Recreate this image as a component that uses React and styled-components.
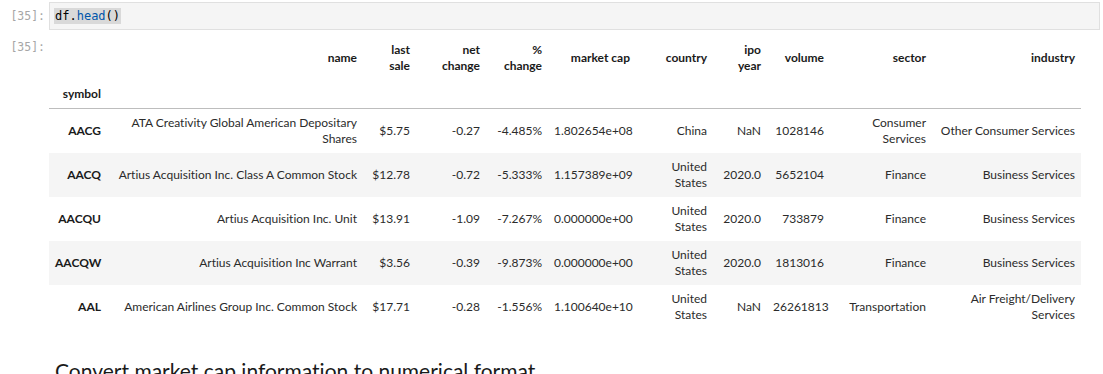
import React from 'react';
import styled, { createGlobalStyle } from 'styled-components';

const GlobalStyle = createGlobalStyle`
  body {
    margin: 0;
    background: #ffffff;
    font-family: Lato, "Open Sans", sans-serif;
    font-variant-ligatures: none;
    overflow: hidden;
  }
`;

const columns = [
  { key: 'name', label: ['name'], width: 256 },
  { key: 'last', label: ['last', 'sale'], width: 53 },
  { key: 'net', label: ['net', 'change'], width: 70 },
  { key: 'pct', label: ['%', 'change'], width: 62 },
  { key: 'cap', label: ['market cap'], width: 88 },
  { key: 'country', label: ['country'], width: 77 },
  { key: 'ipo', label: ['ipo', 'year'], width: 54 },
  { key: 'volume', label: ['volume'], width: 63 },
  { key: 'sector', label: ['sector'], width: 102 },
  { key: 'industry', label: ['industry'], width: 149 },
];

const rows = [
  {
    symbol: 'AACG',
    name: 'ATA Creativity Global American Depositary Shares',
    last: '$5.75', net: '-0.27', pct: '-4.485%', cap: '1.802654e+08',
    country: 'China', ipo: 'NaN', volume: '1028146',
    sector: 'Consumer Services', industry: 'Other Consumer Services',
  },
  {
    symbol: 'AACQ',
    name: 'Artius Acquisition Inc. Class A Common Stock',
    last: '$12.78', net: '-0.72', pct: '-5.333%', cap: '1.157389e+09',
    country: 'United States', ipo: '2020.0', volume: '5652104',
    sector: 'Finance', industry: 'Business Services',
  },
  {
    symbol: 'AACQU',
    name: 'Artius Acquisition Inc. Unit',
    last: '$13.91', net: '-1.09', pct: '-7.267%', cap: '0.000000e+00',
    country: 'United States', ipo: '2020.0', volume: '733879',
    sector: 'Finance', industry: 'Business Services',
  },
  {
    symbol: 'AACQW',
    name: 'Artius Acquisition Inc Warrant',
    last: '$3.56', net: '-0.39', pct: '-9.873%', cap: '0.000000e+00',
    country: 'United States', ipo: '2020.0', volume: '1813016',
    sector: 'Finance', industry: 'Business Services',
  },
  {
    symbol: 'AAL',
    name: 'American Airlines Group Inc. Common Stock',
    last: '$17.71', net: '-0.28', pct: '-1.556%', cap: '1.100640e+10',
    country: 'United States', ipo: 'NaN', volume: '26261813',
    sector: 'Transportation', industry: 'Air Freight/Delivery Services',
  },
];

function Notebook() {
  return (
    <Page>
      <GlobalStyle />
      <Cell>
        <Prompt>[35]:</Prompt>
        <Editor>
          <Selection>
            df.<Prop>head</Prop>()
          </Selection>
        </Editor>
      </Cell>

      <OutputCell>
        <Prompt>[35]:</Prompt>
        <OutputArea>
          <Frame>
            <colgroup>
              <col style={{ width: 58 }} />
              {columns.map((c) => (
                <col key={c.key} style={{ width: c.width }} />
              ))}
            </colgroup>
            <thead>
              <tr>
                <HeadCell />
                {columns.map((c) => (
                  <HeadCell key={c.key}>
                    {c.label.map((l, i) => (
                      <React.Fragment key={i}>
                        {i > 0 && <br />}
                        {l}
                      </React.Fragment>
                    ))}
                  </HeadCell>
                ))}
              </tr>
              <IndexRow>
                <HeadCell>symbol</HeadCell>
                {columns.map((c) => (
                  <HeadCell key={c.key} />
                ))}
              </IndexRow>
            </thead>
            <tbody>
              {rows.map((r, i) => (
                <BodyRow key={r.symbol} $striped={i % 2 === 1}>
                  <HeadCell>{r.symbol}</HeadCell>
                  {columns.map((c) => (
                    <DataCell key={c.key}>{r[c.key]}</DataCell>
                  ))}
                </BodyRow>
              ))}
            </tbody>
          </Frame>
        </OutputArea>
      </OutputCell>

      <MarkdownCell>
        <Heading>Convert market cap information to numerical format</Heading>
      </MarkdownCell>
    </Page>
  );
}

const Page = styled.div`
  width: 1103px;
  padding-top: 2px;
`;

const Cell = styled.div`
  display: flex;
  align-items: flex-start;
`;

const Prompt = styled.div`
  flex: 0 0 49px;
  box-sizing: border-box;
  padding: 7px 4px 0 0;
  text-align: right;
  font-family: "DejaVu Sans Mono", "Liberation Mono", monospace;
  font-size: 11.5px;
  line-height: 14px;
  color: #a6a6a6;
`;

const Editor = styled.div`
  flex: 1;
  margin-right: 3px;
  height: 28px;
  box-sizing: border-box;
  border: 1px solid #e0e0e0;
  background: #f5f5f5;
  padding: 5px 4px;
  font-family: "DejaVu Sans Mono", "Liberation Mono", monospace;
  font-size: 12px;
  line-height: 16px;
  color: #000000;
`;

const Selection = styled.span`
  background: #d9d9d9;
  padding: 1px 1px;
`;

const Prop = styled.span`
  color: #0055aa;
`;

const OutputCell = styled.div`
  display: flex;
  align-items: flex-start;
  margin-top: 6px;

  ${Prompt} {
    padding-top: 4px;
  }
`;

const OutputArea = styled.div`
  flex: 1;
`;

const Frame = styled.table`
  border-collapse: collapse;
  border-spacing: 0;
  table-layout: fixed;
  width: 1032px;
  font-family: Lato, "Open Sans", sans-serif;
  font-size: 12px;
  color: rgba(0, 0, 0, 0.87);

  thead {
    border-bottom: 1px solid #bdbdbd;
  }
`;

const HeadCell = styled.th`
  padding: 6px;
  text-align: right;
  vertical-align: middle;
  font-weight: 700;
  line-height: 16px;
  color: #1a1a1a;
`;

const IndexRow = styled.tr`
  height: 27px;
`;

const BodyRow = styled.tr`
  height: 44px;
  background: ${(p) => (p.$striped ? '#f5f5f5' : '#ffffff')};
`;

const DataCell = styled.td`
  padding: 6px;
  text-align: right;
  vertical-align: middle;
  line-height: 16px;
  font-weight: 400;
  color: #2b2b2b;
`;

const MarkdownCell = styled.div`
  padding: 30px 0 0 55px;
`;

const Heading = styled.h2`
  margin: 0;
  font-family: Lato, "Open Sans", sans-serif;
  font-weight: 400;
  font-size: 21px;
  line-height: 24px;
  color: #1a1a1a;
`;

export default Notebook;
